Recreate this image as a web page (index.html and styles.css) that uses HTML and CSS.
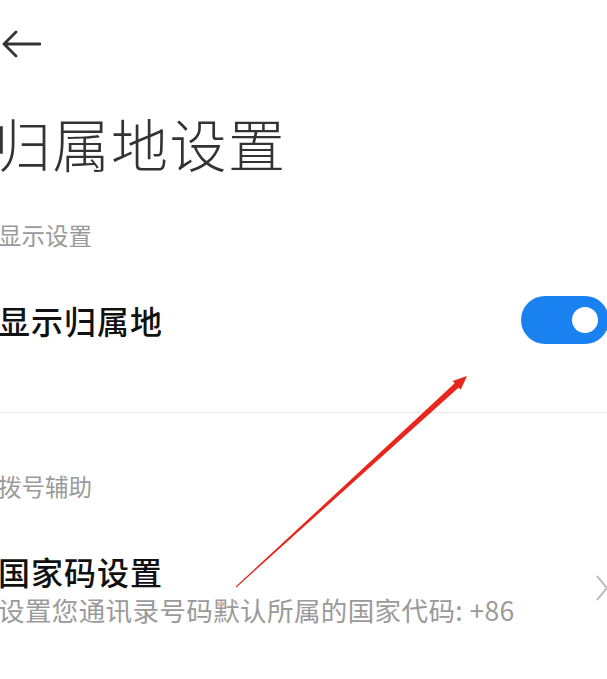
FILE: index.html
```html
<!DOCTYPE html>
<html lang="zh-CN">
<head>
  <meta charset="UTF-8" />
  <meta name="viewport" content="width=device-width, initial-scale=1.0"/>
  <title>归属地设置</title>
  <link rel="stylesheet" href="styles.css">
</head>
<body>
  <div class="page">
    <!-- 顶部返回 -->
    <div class="topbar">
      <svg class="back" width="40" height="28" viewBox="0 0 40 28">
        <path d="M39 14 H3 M15 2 L3 14 L15 26" fill="none" stroke="#333" stroke-width="2.8" stroke-linecap="round" stroke-linejoin="round"/>
      </svg>
    </div>

    <h1 class="title">归属地设置</h1>

    <div class="section-label">显示设置</div>
    <div class="row">
      <div class="row-title">显示归属地</div>
      <div class="switch on"><span class="knob"></span></div>
    </div>

    <div class="divider"></div>

    <div class="section-label second">拨号辅助</div>
    <div class="row row-link">
      <div class="row-text">
        <div class="row-title">国家码设置</div>
        <div class="row-sub">设置您通讯录号码默认所属的国家代码: +86</div>
      </div>
      <svg class="chevron" width="14" height="28" viewBox="0 0 14 28">
        <path d="M2 2 L12 14 L2 26" fill="none" stroke="#bdbdbd" stroke-width="2"/>
      </svg>
    </div>

    <!-- 红色标注箭头 -->
    <svg class="mark" width="607" height="679" viewBox="0 0 607 679">
      <polygon points="236.3,587.4 458.7,387.6 460.7,389.8 467,376 452.7,381 454.7,383.2 235.7,586.6" fill="#e8261c"/>
    </svg>
  </div>
</body>
</html>
```

FILE: styles.css
```css
* {
  box-sizing: border-box;
}

html, body {
  margin: 0;
  padding: 0;
  background: #fff;
  font-family: "Noto Sans CJK SC", "Noto Sans", sans-serif;
  overflow: hidden;
}

.page {
  position: relative;
  width: 607px;
  height: 679px;
  overflow: hidden;
}

.topbar {
  height: 88px;
  display: flex;
  align-items: center;
  padding-left: 1px;
}

.title {
  margin: 22px 0 0 -6px;
  font-size: 57px;
  line-height: 64px;
  font-weight: 300;
  color: #333;
  letter-spacing: 1.5px;
}

.section-label {
  margin: 46px 0 0 -2px;
  font-size: 23.5px;
  line-height: 30px;
  color: #9a9a9a;
}

.section-label.second {
  margin-top: 58px;
}

.row {
  display: flex;
  align-items: center;
  justify-content: space-between;
  height: 96px;
  margin: 22px -2px 0 -2px;
}

.row-title {
  font-size: 32px;
  line-height: 38px;
  font-weight: 500;
  color: #111;
  letter-spacing: 1px;
}

.switch {
  width: 88px;
  height: 48px;
  border-radius: 24px;
  background: #1a82f0;
  display: flex;
  align-items: center;
  justify-content: flex-end;
  padding-right: 11px;
}

.knob {
  width: 26px;
  height: 26px;
  border-radius: 50%;
  background: #fff;
}

.divider {
  height: 1px;
  background: #e6e6e6;
  margin-top: 44px;
}

.row-link {
  height: auto;
  margin-top: 51px;
  align-items: flex-start;
}

.row-sub {
  margin-top: 4px;
  font-size: 26.5px;
  line-height: 32px;
  color: #9a9a9a;
  letter-spacing: 0.4px;
}

.chevron {
  margin-top: 22px;
  margin-right: 0;
}

.mark {
  position: absolute;
  top: 0;
  left: 0;
  pointer-events: none;
}
```
